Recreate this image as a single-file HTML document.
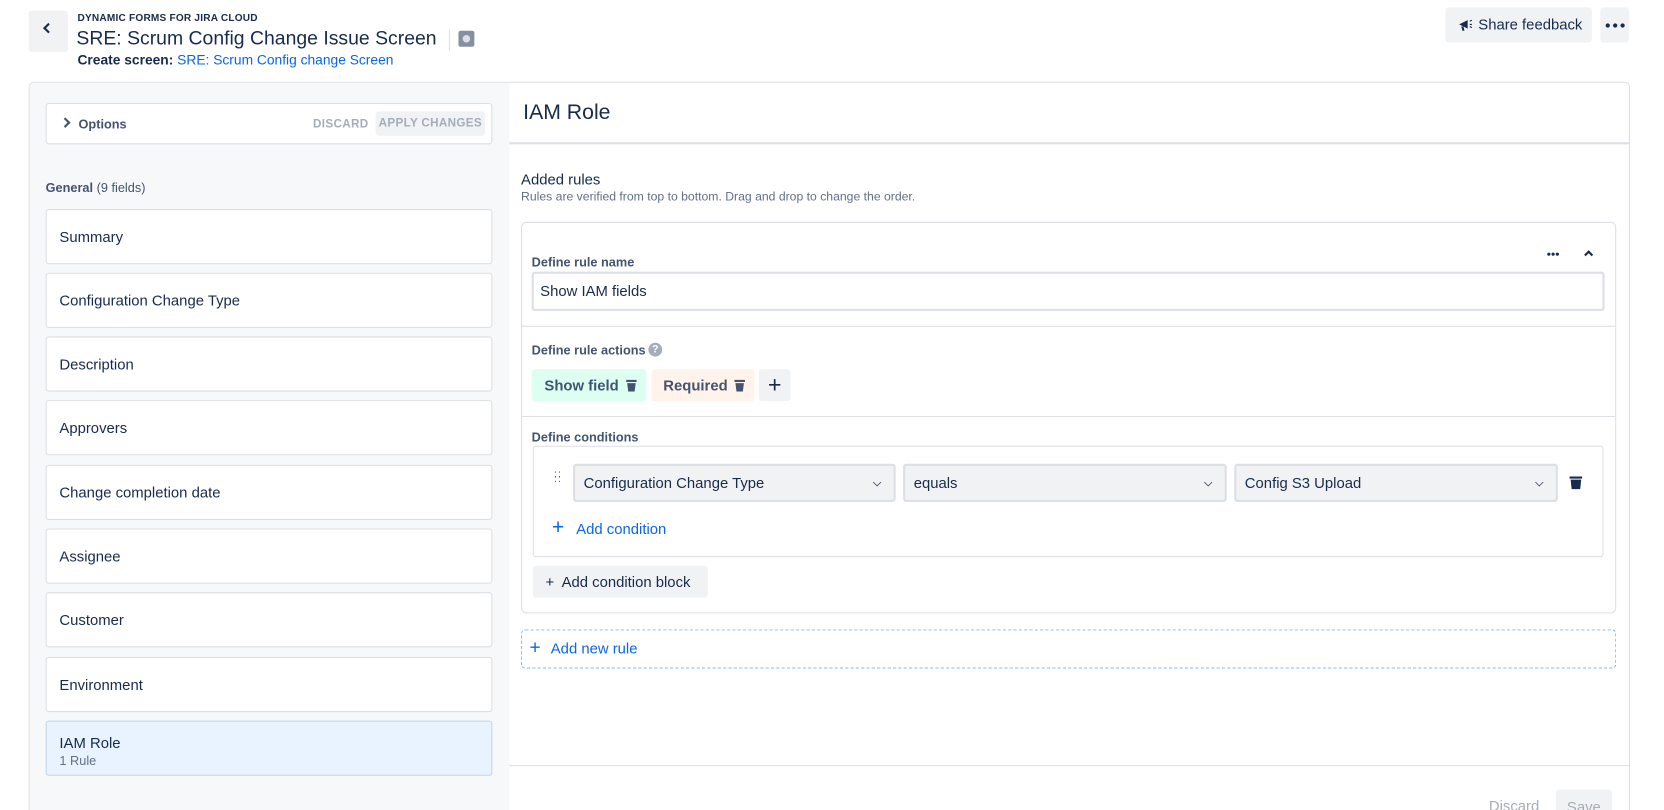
<!DOCTYPE html>
<html><head><style>
*{box-sizing:border-box;margin:0;padding:0}
html,body{width:1664px;height:810px;overflow:hidden;background:#fff}
body{font-family:"Liberation Sans",sans-serif;color:#172b4d;position:relative}
#w{position:absolute;left:0;top:0;width:1568px;height:764px;overflow:hidden;transform:scale(1.06122);transform-origin:0 0}
.a{position:absolute}
.btn{background:#f1f2f4;border-radius:3px}
.card{position:absolute;left:43px;width:421px;height:52px;background:#fff;border:1px solid #dcdfe4;border-radius:3px;font-size:14px;padding:0 12px;line-height:50px}
.lbl{font-size:12px;font-weight:bold;color:#44546f}
.sel{position:absolute;top:437px;height:36px;background:#f1f2f4;border:2px solid #dcdfe4;border-radius:3px;font-size:14px;line-height:32px;padding-left:8px}
.chev{position:absolute;right:12px;top:12px;width:7px;height:7px;border-right:1.6px solid #44546f;border-bottom:1.6px solid #44546f;transform:rotate(45deg) scale(.8)}
.dot{position:absolute;width:4px;height:4px;border-radius:50%;background:#172b4d}
</style></head><body><div id="w">
<div class="a btn" style="left:27px;top:10px;width:37px;height:39px"></div>
<div class="a" style="left:42px;top:23px;width:7px;height:7px;border-left:2px solid #172b4d;border-bottom:2px solid #172b4d;transform:rotate(45deg)"></div>
<div class="a" style="left:73px;top:12px;font-size:9.5px;font-weight:bold;letter-spacing:.2px">DYNAMIC FORMS FOR JIRA CLOUD</div>
<div class="a" style="left:72px;top:25px;font-size:18.3px">SRE: Scrum Config Change Issue Screen</div>
<div class="a" style="left:423px;top:28px;width:1px;height:20px;background:#dcdfe4"></div>
<div class="a" style="left:432px;top:29px;width:15px;height:15px;background:#8590a2;border-radius:2px"><div class="a" style="left:4px;top:4px;width:7px;height:7px;border-radius:50%;background:#dcdfe4"></div></div>
<div class="a" style="left:73px;top:49px;font-size:13px"><b>Create screen:</b> <span style="color:#0c66e4">SRE: Scrum Config change Screen</span></div>
<div class="a btn" style="left:1362px;top:7px;width:138px;height:33px;font-size:14px;line-height:33px;padding-left:31px">Share feedback</div>
<svg class="a" style="left:1374px;top:16px" width="14" height="14" viewBox="0 0 14 14"><path d="M1 7l8-4v8z M3 9l1 4h2l-1-4z" fill="#172b4d"/><path d="M11 4l2-1M11 7h2M11 9l2 1" stroke="#172b4d" stroke-width="1"/></svg>
<div class="a btn" style="left:1508px;top:7px;width:27px;height:33px"><div class="dot" style="left:5px;top:15px"></div><div class="dot" style="left:12px;top:15px"></div><div class="dot" style="left:19px;top:15px"></div></div>

<div class="a" style="left:27px;top:77px;width:1509px;height:760px;border:1px solid #dcdfe4;border-radius:5px;background:#fff;overflow:hidden">
<div class="a" style="left:0;top:0;width:452px;height:760px;background:#f7f8f9"></div>
</div>
<div class="a" style="left:43px;top:97px;width:421px;height:39px;background:#fff;border:1px solid #dcdfe4;border-radius:3px"></div>
<div class="a" style="left:58px;top:112px;width:7px;height:7px;border-right:2px solid #44546f;border-top:2px solid #44546f;transform:rotate(45deg)"></div>
<div class="a" style="left:74px;top:110px;font-size:12px;font-weight:bold;color:#44546f">Options</div>
<div class="a" style="left:295px;top:111px;font-size:11px;font-weight:bold;color:#a5adba;letter-spacing:.3px">DISCARD</div>
<div class="a" style="left:354px;top:105px;width:103px;height:23px;background:#f1f2f4;border-radius:3px;font-size:11px;font-weight:bold;color:#a5adba;letter-spacing:.3px;text-align:center;line-height:23px">APPLY CHANGES</div>
<div class="a" style="left:43px;top:170px;font-size:12px;color:#44546f"><b>General</b> (9 fields)</div>
<div class="card" style="top:197px">Summary</div>
<div class="card" style="top:257px">Configuration Change Type</div>
<div class="card" style="top:317px">Description</div>
<div class="card" style="top:377px">Approvers</div>
<div class="card" style="top:438px">Change completion date</div>
<div class="card" style="top:498px">Assignee</div>
<div class="card" style="top:558px">Customer</div>
<div class="card" style="top:619px">Environment</div>
<div class="card" style="top:679px;background:#e9f2ff;border-color:#c2d4ef;line-height:normal;padding-top:12px">IAM Role<div style="font-size:12px;color:#626f86;margin-top:2px">1 Rule</div></div>

<div class="a" style="left:493px;top:95px;font-size:20px">IAM Role</div>
<div class="a" style="left:480px;top:134px;width:1055px;height:2px;background:#dcdfe4"></div>
<div class="a" style="left:491px;top:161px;font-size:14px">Added rules</div>
<div class="a" style="left:491px;top:180px;font-size:11.5px;color:#626f86">Rules are verified from top to bottom. Drag and drop to change the order.</div>

<div class="a" style="left:491px;top:209px;width:1032px;height:369px;border:1px solid #dcdfe4;border-radius:5px"></div>
<div class="dot" style="left:1458px;top:238px;width:3px;height:3px"></div><div class="dot" style="left:1462px;top:238px;width:3px;height:3px"></div><div class="dot" style="left:1466px;top:238px;width:3px;height:3px"></div>
<div class="a" style="left:1494px;top:237px;width:6px;height:6px;border-left:2px solid #172b4d;border-top:2px solid #172b4d;transform:rotate(45deg)"></div>
<div class="a lbl" style="left:501px;top:240px">Define rule name</div>
<div class="a" style="left:501px;top:256px;width:1011px;height:37px;border:2px solid #dcdfe4;border-radius:3px;font-size:14px;line-height:33px;padding-left:6px">Show IAM fields</div>
<div class="a" style="left:492px;top:307px;width:1030px;height:1px;background:#dcdfe4"></div>
<div class="a lbl" style="left:501px;top:323px">Define rule actions</div>
<div class="a" style="left:611px;top:323px;width:13px;height:13px;border-radius:50%;background:#a5adba;color:#fff;font-size:10px;font-weight:bold;text-align:center;line-height:13px">?</div>
<div class="a" style="left:501px;top:348px;width:108px;height:30px;background:#dcfff1;border-radius:3px;font-size:14px;font-weight:bold;color:#44546f;line-height:30px;padding-left:12px">Show field</div>
<div class="a" style="left:614px;top:348px;width:97px;height:30px;background:#fff3eb;border-radius:3px;font-size:14px;font-weight:bold;color:#44546f;line-height:30px;padding-left:11px">Required</div>
<svg class="a" style="left:590px;top:357px" width="10" height="12" viewBox="0 0 10 12"><path d="M0 1h10v2H0zM1 4h8l-1 8H2z" fill="#44546f"/></svg>
<svg class="a" style="left:692px;top:357px" width="10" height="12" viewBox="0 0 10 12"><path d="M0 1h10v2H0zM1 4h8l-1 8H2z" fill="#44546f"/></svg>
<div class="a btn" style="left:715px;top:348px;width:30px;height:30px;font-size:22px;text-align:center;line-height:29px">+</div>
<div class="a" style="left:492px;top:392px;width:1030px;height:1px;background:#dcdfe4"></div>
<div class="a lbl" style="left:501px;top:405px">Define conditions</div>
<div class="a" style="left:502px;top:420px;width:1009px;height:105px;border:1px solid #dcdfe4;border-radius:3px"></div>
<div class="a" style="left:522px;top:446px;font-size:10px;line-height:4px;color:#44546f;letter-spacing:1px">::<br>::</div>
<div class="sel" style="left:540px;width:304px">Configuration Change Type<div class="chev"></div></div>
<div class="sel" style="left:851px;width:305px">equals<div class="chev"></div></div>
<div class="sel" style="left:1163px;width:305px">Config S3 Upload<div class="chev"></div></div>
<svg class="a" style="left:1479px;top:448px" width="12" height="13" viewBox="0 0 12 13"><path d="M0 1h12v2H0zM1 4h10l-1 9H2z" fill="#172b4d"/></svg>
<div class="a" style="left:520px;top:486px;font-size:20px;color:#0c66e4">+</div>
<div class="a" style="left:543px;top:490px;font-size:14px;color:#0c66e4">Add condition</div>
<div class="a btn" style="left:502px;top:533px;width:165px;height:30px;font-size:14px;line-height:30px;padding-left:12px">+&nbsp; Add condition block</div>
<div class="a" style="left:491px;top:593px;width:1032px;height:37px;border:1px dashed #85b8ff;border-radius:4px"></div>
<div class="a" style="left:499px;top:600px;font-size:18px;color:#0c66e4">+</div>
<div class="a" style="left:519px;top:603px;font-size:14px;color:#0c66e4">Add new rule</div>
<div class="a" style="left:480px;top:721px;width:1055px;height:1px;background:#dcdfe4"></div>
<div class="a" style="left:1403px;top:751px;font-size:14px;color:#a5adba">Discard</div>
<div class="a btn" style="left:1466px;top:744px;width:53px;height:30px;font-size:14px;color:#a5adba;text-align:center;line-height:32px">Save</div>
</div></body></html>
